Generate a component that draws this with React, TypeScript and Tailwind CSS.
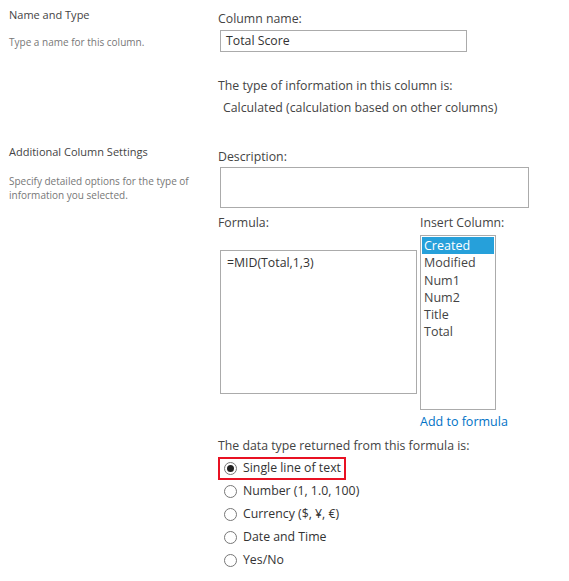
import React from "react";

const font = { fontFamily: '"Open Sans", "Noto Sans", sans-serif' };

function Radio({ label, checked, boxed }: { label: string; checked?: boolean; boxed?: boolean }) {
  return (
    <div className="relative flex h-[23px] items-center">
      {boxed && <div className="absolute left-[-1px] top-[0px] h-[23px] w-[128px] border-2 border-[#e81123]" />}
      <span className="ml-[5px] flex h-[13px] w-[13px] items-center justify-center rounded-full border border-[#777] bg-white">
        {checked && <span className="h-[7px] w-[7px] rounded-full bg-[#222]" />}
      </span>
      <span className="ml-[6px] text-[12.3px] text-[#333]">{label}</span>
    </div>
  );
}

export default function App() {
  const items = ["Created", "Modified", "Num1", "Num2", "Title", "Total"];
  return (
    <div className="relative h-[581px] w-[569px] overflow-hidden bg-white text-[#444]" style={font}>
      <div className="grid grid-cols-[209px_1fr]">
        {/* Section 1 left */}
        <div className="pl-[9px] pt-[7px]">
          <div className="text-[11px] leading-[16px] text-[#444]">Name and Type</div>
          <div className="mt-[12px] text-[10px] leading-[14px] text-[#777]">Type a name for this column.</div>
        </div>
        {/* Section 1 right */}
        <div className="pl-[9px] pt-[10px]">
          <div className="text-[12.3px] leading-[18px] text-[#444]">Column name:</div>
          <div className="ml-[2px] mt-[2px] flex h-[22px] w-[247px] items-center border border-[#ababab] pl-[5px] text-[12.3px] text-[#333]">
            Total Score
          </div>
          <div className="mt-[25px] text-[12.3px] leading-[18px]">The type of information in this column is:</div>
          <div className="mt-[4px] pl-[5px] text-[12.3px] leading-[18px]">Calculated (calculation based on other columns)</div>
        </div>

        {/* Section 2 left */}
        <div className="pl-[9px] pt-[27px]">
          <div className="text-[11px] leading-[16px] text-[#444]">Additional Column Settings</div>
          <div className="mt-[14px] w-[190px] text-[10px] leading-[14px] text-[#777]">
            Specify detailed options for the type of information you selected.
          </div>
        </div>
        {/* Section 2 right */}
        <div className="pl-[9px] pt-[31px]">
          <div className="text-[12.3px] leading-[18px]">Description:</div>
          <div className="ml-[2px] mt-[1px] h-[41px] w-[309px] border border-[#ababab]" />
          <div className="mt-[6px] flex">
            <div className="w-[202px]">
              <div className="text-[12.3px] leading-[18px]">Formula:</div>
              <div className="ml-[2px] mt-[18px] h-[144px] w-[197px] border border-[#ababab] px-[6px] pt-[3px] text-[12.3px] leading-[18px] text-[#333]">
                =MID(Total,1,3)
              </div>
            </div>
            <div>
              <div className="text-[12.3px] leading-[18px]">Insert Column:</div>
              <div className="mt-[3px] h-[175px] w-[76px] border border-[#ababab] p-[1px] text-[12.5px] leading-[17.3px] text-[#444]">
                {items.map((it, i) => (
                  <div key={it} className={i === 0 ? "bg-[#26a0da] pl-[2px] text-white" : "pl-[2px]"}>
                    {it}
                  </div>
                ))}
              </div>
              <div className="mt-[3px] text-[12.5px] leading-[18px] text-[#0072c6]">Add to formula</div>
            </div>
          </div>
          <div className="mt-[6px] text-[12.3px] leading-[18px]">The data type returned from this formula is:</div>
          <div className="mt-[2px] pl-[1px]">
            <Radio label="Single line of text" checked boxed />
            <Radio label="Number (1, 1.0, 100)" />
            <Radio label="Currency ($, ¥, €)" />
            <Radio label="Date and Time" />
            <Radio label="Yes/No" />
          </div>
        </div>
      </div>
    </div>
  );
}
